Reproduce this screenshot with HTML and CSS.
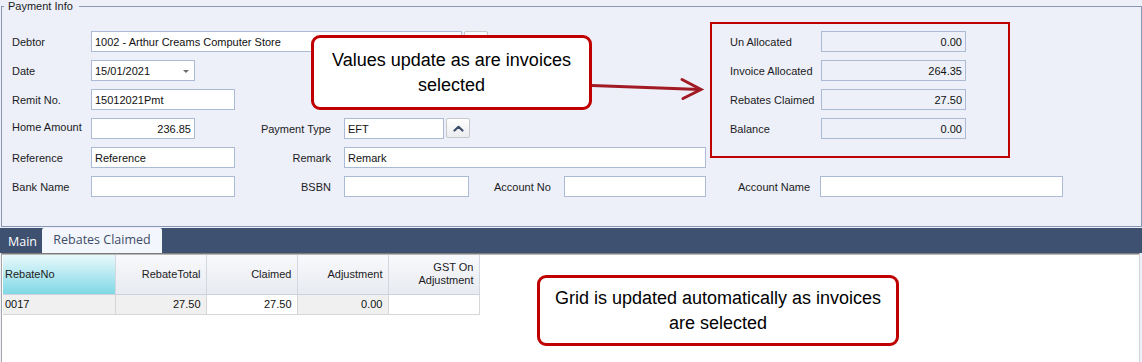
FILE: index.html
```html
<!DOCTYPE html>
<html>
<head>
<meta charset="utf-8">
<link rel="stylesheet" href="styles.css">
</head>
<body>
<div class="screen">
  <fieldset class="group">
    <legend>Payment Info</legend>
    <div class="form">
      <label class="lbl r1">Debtor</label>
      <div class="field r1 c-debtor">
        <div class="input w-debtor">1002 - Arthur Creams Computer Store</div>
        <div class="btn"></div>
      </div>

      <label class="lbl r2">Date</label>
      <div class="input r2 w-date combo">15/01/2021<span class="caret"></span></div>

      <label class="lbl r3">Remit No.</label>
      <div class="input r3 w-med">15012021Pmt</div>

      <label class="lbl r4 lbl-top">Home Amount</label>
      <div class="input r4 w-date num">236.85</div>
      <label class="lbl mid r4">Payment Type</label>
      <div class="field r4 c-right">
        <div class="input w-pt">EFT</div>
        <div class="btn">
          <svg width="11" height="7" viewBox="0 0 11 7"><polyline points="1.5,5.5 5.5,1.8 9.5,5.5" fill="none" stroke="#3e4d69" stroke-width="2.2" stroke-linecap="round" stroke-linejoin="round"/></svg>
        </div>
      </div>

      <label class="lbl r5">Reference</label>
      <div class="input r5 w-med">Reference</div>
      <label class="lbl mid r5">Remark</label>
      <div class="input r5 c-right w-remark">Remark</div>

      <label class="lbl r6">Bank Name</label>
      <div class="input r6 w-med"></div>
      <label class="lbl mid r6">BSBN</label>
      <div class="field r6 c-bank">
        <div class="input w-bsbn"></div>
        <label class="lbl acc-no">Account No</label>
        <div class="input w-accno"></div>
        <label class="lbl acc-name">Account Name</label>
        <div class="input w-accname"></div>
      </div>

      <div class="summary">
        <div class="sum-row"><span class="sum-lbl">Un Allocated</span><span class="sum-val">0.00</span></div>
        <div class="sum-row"><span class="sum-lbl">Invoice Allocated</span><span class="sum-val">264.35</span></div>
        <div class="sum-row"><span class="sum-lbl">Rebates Claimed</span><span class="sum-val">27.50</span></div>
        <div class="sum-row"><span class="sum-lbl">Balance</span><span class="sum-val">0.00</span></div>
      </div>
    </div>
  </fieldset>

  <div class="tabs">
    <div class="tab">Main</div>
    <div class="tab active">Rebates Claimed</div>
  </div>

  <div class="gridwrap">
    <table class="grid">
      <colgroup>
        <col class="col-no"><col class="col-n"><col class="col-n"><col class="col-n"><col class="col-n">
      </colgroup>
      <thead>
        <tr>
          <th class="sel left">RebateNo</th>
          <th>RebateTotal</th>
          <th>Claimed</th>
          <th>Adjustment</th>
          <th>GST On<br>Adjustment</th>
        </tr>
      </thead>
      <tbody>
        <tr>
          <td class="ro left">0017</td>
          <td class="ro">27.50</td>
          <td>27.50</td>
          <td class="ro">0.00</td>
          <td></td>
        </tr>
      </tbody>
    </table>
  </div>

  <div class="callout callout-top">Values update as are invoices<br>selected</div>
  <div class="callout callout-bottom">Grid is updated automatically as invoices<br>are selected</div>

  <svg class="arrow" width="1142" height="362" viewBox="0 0 1142 362">
    <line x1="592" y1="85.5" x2="700" y2="89.5" stroke="#a11a24" stroke-width="3"/>
    <polyline points="682,79.5 701,89.5 683,98.5" fill="none" stroke="#a11a24" stroke-width="3" stroke-linecap="round" stroke-linejoin="miter"/>
  </svg>
</div>
</body>
</html>
```

FILE: styles.css
```css
* { box-sizing: border-box; }
html, body { margin: 0; padding: 0; }
body {
  width: 1142px;
  height: 362px;
  overflow: hidden;
  background: #edf0f8;
  font-family: "Liberation Sans", Arial, sans-serif;
  font-size: 11px;
  color: #1c1b24;
}
.screen { position: relative; width: 1142px; height: 362px; }

/* group box */
.group {
  margin: 0 0 0 1px;
  width: 1141px;
  border: 1px solid #8797b3;
  padding: 18px 0 29px 10px;
  min-width: 0;
}
.group legend {
  padding: 0 6px 0 4px;
  margin-left: -8px;
  font-size: 11px;
  line-height: 13px;
  color: #1c1b24;
}

.form {
  display: grid;
  grid-template-columns: 79px 144px 109px 362px 4px 300px 1fr;
  grid-template-rows: repeat(6, 21px);
  row-gap: 8px;
}
.r1 { grid-row: 1; }
.r2 { grid-row: 2; }
.r3 { grid-row: 3; }
.r4 { grid-row: 4; }
.r5 { grid-row: 5; }
.r6 { grid-row: 6; }

.lbl {
  grid-column: 1;
  display: flex;
  align-items: center;
  white-space: nowrap;
  color: #1c1b24;
}
.lbl-top { align-items: flex-start; padding-top: 3px; }
.lbl.mid {
  grid-column: 3;
  justify-content: flex-end;
  padding-right: 13px;
}
.field { display: flex; gap: 2px; }
.c-debtor { grid-column: 2 / 5; }
.c-right { grid-column: 4; }
.c-bank { grid-column: 4 / 8; gap: 0; }

.input {
  grid-column: 2;
  height: 21px;
  background: #fff;
  border: 1px solid #abbad5;
  padding: 0 3px;
  display: flex;
  align-items: center;
  white-space: nowrap;
  overflow: hidden;
  color: #111;
  position: relative;
}
.input.c-right { grid-column: 4; }
.num { justify-content: flex-end; }
.w-debtor { width: 371px; }
.w-date { width: 104px; }
.w-med { width: 144px; }
.w-pt { width: 100px; }
.w-remark { width: 362px; }
.w-bsbn { width: 125px; }
.w-accno { width: 142px; }
.w-accname { width: 243px; }

.acc-no { width: 70px; margin-left: 25px; }
.acc-name { width: 82px; margin-left: 32px; }

.caret {
  position: absolute;
  right: 5px;
  top: 9px;
  width: 0;
  height: 0;
  border-left: 3px solid transparent;
  border-right: 3px solid transparent;
  border-top: 3px solid #6c6c6c;
}

.btn {
  width: 24px;
  height: 20px;
  border: 1px solid #c6c8cc;
  border-radius: 2px;
  background: linear-gradient(#ffffff, #ebecef);
  display: flex;
  align-items: center;
  justify-content: center;
}

/* summary box */
.summary {
  grid-column: 6;
  grid-row: 1 / 6;
  align-self: start;
  margin-top: -9px;
  height: 136px;
  border: 2px solid #c00000;
  padding: 7px 0 0 18px;
  display: flex;
  flex-direction: column;
  gap: 8px;
}
.sum-row { display: flex; align-items: center; height: 21px; }
.sum-lbl { width: 91px; white-space: nowrap; }
.sum-val {
  width: 145px;
  height: 21px;
  border: 1px solid #abbad5;
  background: #edf0f8;
  display: flex;
  align-items: center;
  justify-content: flex-end;
  padding-right: 3px;
  color: #111;
}

/* tabs */
.tabs {
  margin-top: 1px;
  height: 25px;
  background: #3f5170;
  display: flex;
  padding-left: 4px;
  font-family: "Open Sans", "DejaVu Sans", sans-serif;
  font-size: 12.5px;
}
.tab {
  color: #fff;
  padding: 0 4px;
  display: flex;
  align-items: center;
  padding-top: 2px;
}
.tab.active {
  width: 120px;
  margin-left: 1px;
  background: #f3f6fc;
  color: #3e4c68;
  border-radius: 2px 2px 0 0;
  justify-content: center;
  padding-top: 0;
  padding-bottom: 2px;
}

/* grid */
.gridwrap {
  border-top: 1px solid #7c7c7c;
  box-shadow: inset 0 1px 0 #b9b9b9;
  margin-left: 1px;
  width: 1139px;
  height: 109px;
  background: #fff;
  border-left: 1px solid #a5a5a5;
  border-right: 1px solid #d4d4d4;
  padding: 1px 0 0 1px;
}
.grid {
  border-collapse: collapse;
  table-layout: fixed;
  width: 476px;
  font-size: 11px;
}
.col-no { width: 112px; }
.col-n { width: 91px; }
.grid th {
  height: 39px;
  font-weight: normal;
  text-align: right;
  padding: 0 5px 0 2px;
  color: #1c1b24;
  background: linear-gradient(#f8f9fc, #e7eaf0);
  border-right: 1px solid #d3d7df;
  border-bottom: 1px solid #cdd1d9;
  line-height: 13px;
}
.grid th.sel { background: linear-gradient(#e9f9fc, #80d8e6); }
.grid .left { text-align: left; }
.grid td {
  height: 20px;
  padding: 0 5px 0 2px;
  text-align: right;
  background: #fff;
  border-right: 1px solid #d6d6d6;
  border-bottom: 1px solid #d6d6d6;
  color: #111;
}
.grid td.ro { background: #f0f0f0; }

/* callouts */
.callout {
  position: absolute;
  background: #fff;
  border: 3px solid #c00000;
  border-radius: 9px;
  font-family: "Liberation Sans", Arial, sans-serif;
  font-size: 18px;
  line-height: 25px;
  color: #000;
  text-align: center;
  display: flex;
  align-items: center;
  justify-content: center;
}
.callout-top { left: 311px; top: 35px; width: 281px; height: 75px; }
.callout-bottom { left: 537px; top: 275px; width: 362px; height: 71px; }

.arrow { position: absolute; left: 0; top: 0; pointer-events: none; }
```
